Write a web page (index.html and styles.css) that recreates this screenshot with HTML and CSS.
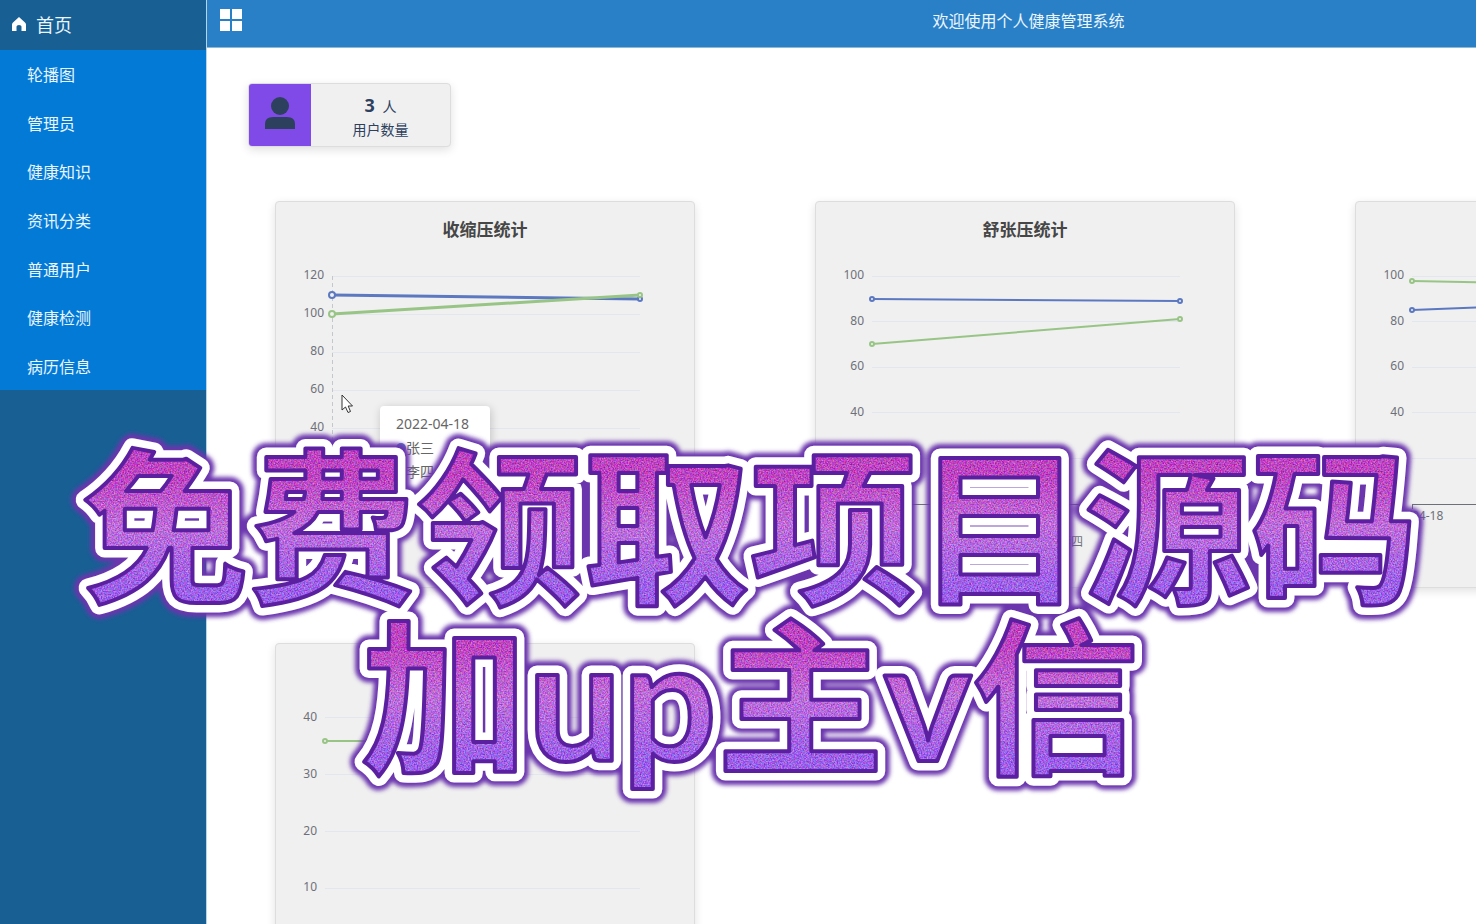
FILE: index.html
```html
<!DOCTYPE html>
<html lang="zh-CN">
<head>
    <meta charset="UTF-8">
    <meta name="viewport" content="width=device-width, initial-scale=1.0">
    <title>个人健康管理系统</title>
    <link rel="stylesheet" href="styles.css">
</head>
<body>
    <div class="app">
        <nav class="sidebar">
            <a class="home" href="#">
                <svg width="16" height="16" viewBox="0 0 16 16"><path fill="#fff" d="M8 1 L14 6.5 Q15 7.500 15 8.500 V15 H10.500 V10.500 Q10.500 9 8 9 Q5.500 9 5.500 10.500 V15 H1 V8.500 Q1 7.500 2 6.500 Z"/></svg>
                首页
            </a>
            <div class="menu">
                <a href="#">轮播图</a>
                <a href="#">管理员</a>
                <a href="#">健康知识</a>
                <a href="#">资讯分类</a>
                <a href="#">普通用户</a>
                <a href="#">健康检测</a>
                <a href="#">病历信息</a>
            </div>
        </nav>

        <div class="main">
            <header class="topbar">
                <button type="button" class="toggle" aria-label="菜单">
                    <svg width="22" height="22" viewBox="0 0 22 22" fill="#fff">
                        <rect x="0" y="0" width="10" height="10"/>
                        <rect x="12" y="0" width="10" height="10"/>
                        <rect x="0" y="12" width="10" height="10"/>
                        <rect x="12" y="12" width="10" height="10"/>
                    </svg>
                </button>
                <span class="welcome">欢迎使用个人健康管理系统</span>
            </header>

            <div class="stat">
                <div class="stat-icon">
                    <svg width="30" height="34" viewBox="0 0 30 34" fill="#2d405e">
                        <circle cx="15" cy="10" r="9"/>
                        <path d="M0 33 V28 Q0 21 8 21 H22 Q30 21 30 28 V33 Z"/>
                    </svg>
                </div>
                <div class="stat-text">
                    <div><b>3</b> 人</div>
                    <div>用户数量</div>
                </div>
            </div>

            <div class="charts">
                <section class="card">
                    <h2>收缩压统计</h2>
                    <svg class="chart" viewBox="0 0 418 345">
                        <path class="grid" d="M56 34.500H364M56 72.500H364M56 110.500H364M56 148.500H364M56 186.500H364M56 224.500H364"/>
                        <path class="axis" d="M56 262.500H364M56.500 262V267M363.500 262V267"/>
                        <path class="pointer" d="M56.500 34V262"/>
                        <g class="y">
                            <text x="48" y="37">120</text>
                            <text x="48" y="75">100</text>
                            <text x="48" y="113">80</text>
                            <text x="48" y="151">60</text>
                            <text x="48" y="189">40</text>
                            <text x="48" y="227">20</text>
                            <text x="48" y="265">0</text>
                        </g>
                        <g class="blue strong">
                            <path d="M56 53L364 57"/>
                            <circle cx="56" cy="53" r="3"/><circle cx="364" cy="57" r="2"/>
                        </g>
                        <g class="green strong">
                            <path d="M56 72L364 53"/>
                            <circle cx="56" cy="72" r="3"/><circle cx="364" cy="53" r="2"/>
                        </g>
                    </svg>
                    <svg class="cursor" width="14" height="20" viewBox="0 0 14 20"><path fill="#fff" stroke="#333" d="M1 1V16L4.500 13L7 18.500L9.500 17.500L7.200 12H11.500Z"/></svg>
                    <div class="tooltip">
                        <div>2022-04-18</div>
                        <div><i class="dot dot-blue"></i>张三</div>
                        <div><i class="dot dot-green"></i>李四</div>
                    </div>
                </section>

                <section class="card">
                    <h2>舒张压统计</h2>
                    <svg class="chart" viewBox="0 0 418 345">
                        <path class="grid" d="M56 34.500H364M56 79.500H364M56 125.500H364M56 170.500H364M56 216.500H364"/>
                        <path class="axis" d="M56 262.500H364M56.500 262V267M363.500 262V267"/>
                        <g class="y">
                            <text x="48" y="37">100</text>
                            <text x="48" y="83">80</text>
                            <text x="48" y="128">60</text>
                            <text x="48" y="174">40</text>
                            <text x="48" y="219">20</text>
                            <text x="48" y="265">0</text>
                        </g>
                        <g class="blue">
                            <path d="M56 57L364 59"/>
                            <circle cx="56" cy="57" r="2"/><circle cx="364" cy="59" r="2"/>
                        </g>
                        <g class="green">
                            <path d="M56 102L364 77"/>
                            <circle cx="56" cy="102" r="2"/><circle cx="364" cy="77" r="2"/>
                        </g>
                        <text class="legend" x="243" y="304">李四</text>
                    </svg>
                </section>

                <section class="card">
                    <h2></h2>
                    <svg class="chart" viewBox="0 0 418 345">
                        <path class="grid" d="M56 34.500H364M56 79.500H364M56 125.500H364M56 170.500H364M56 216.500H364"/>
                        <path class="axis" d="M56 262.500H364M56.500 262V267M363.500 262V267"/>
                        <g class="y">
                            <text x="48" y="37">100</text>
                            <text x="48" y="83">80</text>
                            <text x="48" y="128">60</text>
                            <text x="48" y="174">40</text>
                        </g>
                        <text class="date" x="56" y="278">2022-04-18</text>
                        <g class="blue">
                            <path d="M56 68L364 56"/>
                            <circle cx="56" cy="68" r="2"/><circle cx="364" cy="56" r="2"/>
                        </g>
                        <g class="green">
                            <path d="M56 39L364 45"/>
                            <circle cx="56" cy="39" r="2"/><circle cx="364" cy="45" r="2"/>
                        </g>
                    </svg>
                </section>

                <section class="card">
                    <h2></h2>
                    <svg class="chart" viewBox="0 0 418 345">
                        <path class="grid" d="M49 33.500H364M49 90.500H364M49 147.500H364M49 204.500H364"/>
                        <g class="y">
                            <text x="41" y="37">40</text>
                            <text x="41" y="94">30</text>
                            <text x="41" y="151">20</text>
                            <text x="41" y="207">10</text>
                        </g>
                        <g class="green">
                            <path d="M49 57H150"/>
                            <circle cx="49" cy="57" r="2"/>
                        </g>
                    </svg>
                </section>
            </div>
        </div>

        <svg class="banner">
            <defs>
                <linearGradient id="fill" x1="0" y1="0" x2="0" y2="1">
                    <stop offset="0.25" stop-color="#b840bc"/>
                    <stop offset="0.5" stop-color="#b868d4"/>
                    <stop offset="0.8" stop-color="#985ce4"/>
                </linearGradient>
                <filter id="glow" x="-5%" y="-10%" width="110%" height="120%">
                    <feGaussianBlur stdDeviation="2"/>
                </filter>
                <!-- glitter grain, kept inside the letters -->
                <filter id="grain" x="0" y="0" width="100%" height="100%" color-interpolation-filters="sRGB">
                    <feTurbulence type="fractalNoise" baseFrequency="0.7" numOctaves="2" seed="4"/>
                    <feColorMatrix values="2 0 0 0 -0.5  0 2 0 0 -0.5  0 0 2 0 -0.5  0 0 0 0 1" result="noise"/>
                    <feComposite in="SourceGraphic" in2="noise" operator="arithmetic" k2="1" k3="0.4" k4="-0.18"/>
                    <feComposite in2="SourceGraphic" operator="in"/>
                </filter>
                <g id="words">
                    <text x="50.800%" y="591">免费领取项目源码</text>
                    <text x="50.800%" y="761">加up主v信</text>
                </g>
            </defs>
            <use href="#words" class="layer-glow"/>
            <use href="#words" class="layer-white"/>
            <use href="#words" class="layer-fill"/>
            <use href="#words" class="layer-edge"/>
        </svg>
    </div>
</body>
</html>
```
FILE: styles.css
```css
body {
    margin: 0;
    font-family: "Noto Sans", "Noto Sans CJK SC", sans-serif;
    font-size: 16px;
    color: #2d405e;
    background-color: #fff;
}
a {
    color: #eaf6ff;
    text-decoration: none;
}
.app {
    position: relative;
    display: flex;
    height: 100vh;
    overflow: hidden;
}

/* sidebar */
.sidebar {
    flex: 0 0 206px;
    background-color: #185f94;
    border-right: 1px solid #b5d6ea;
}
.home {
    display: flex;
    align-items: center;
    gap: 9px;
    height: 48px;
    padding: 0 0 2px 11px;
    font-size: 18px;
}
.menu {
    display: flex;
    flex-direction: column;
    height: 340px;
    background-color: #037ad6;
}
.menu a {
    flex: 1;
    display: flex;
    align-items: center;
    padding-left: 27px;
}

/* top bar */
.main {
    flex: 1;
    min-width: 0;
    overflow: hidden;
}
.topbar {
    display: flex;
    height: 47px;
    background-color: #2a80c6;
    border-bottom: 1px solid #8fb9d3;
}
.toggle {
    padding: 9px 13px;
    border: none;
    background: none;
    line-height: 0;
    align-self: flex-start;
    cursor: pointer;
}
.welcome {
    flex: 1;
    padding-left: 326px;
    text-align: center;
    line-height: 42px;
    color: #eaf6ff;
}

/* user count */
.stat {
    display: flex;
    width: 201px;
    height: 62px;
    margin: 35px 0 54px 41px;
    border: 1px solid #ddd;
    border-radius: 4px;
    background-color: #f0f0f0;
    box-shadow: 0 3px 10px rgba(0, 0, 0, 0.12);
    overflow: hidden;
}
.stat-icon {
    display: flex;
    width: 62px;
    padding-bottom: 4px;
    align-items: center;
    justify-content: center;
    background-color: #804ae8;
}
.stat-text {
    flex: 1;
    padding-top: 10px;
    text-align: center;
    font-size: 14px;
    line-height: 23px;
}
.stat-text b {
    margin-right: 4px;
    font-size: 18px;
}

/* charts */
.charts {
    display: grid;
    grid-template-columns: repeat(3, 420px);
    gap: 55px 120px;
    padding-left: 68px;
}
.card {
    position: relative;
    height: 385px;
    border: 1px solid #ddd;
    border-radius: 4px;
    background-color: #f0f0f0;
    box-shadow: 0 3px 10px rgba(0, 0, 0, 0.12);
}
.card h2 {
    height: 24px;
    margin: 0;
    padding-top: 16px;
    text-align: center;
    font-size: 17px;
    line-height: 24px;
    color: #464646;
}
.chart {
    display: block;
    width: 100%;
    font-size: 12px;
    fill: #6e7079;
}
.grid {
    stroke: #e2e6ee;
}
.axis {
    stroke: #6e7079;
}
.pointer {
    stroke: #c4c8cc;
    stroke-dasharray: 4 3;
}
.y {
    text-anchor: end;
}
.date {
    text-anchor: middle;
}
.blue {
    stroke: #5b78c0;
    stroke-width: 2;
    fill: #f0f0f0;
}
.green {
    stroke: #98c585;
    stroke-width: 2;
    fill: #f0f0f0;
}
.strong {
    stroke-width: 3;
}
.chart circle {
    stroke-width: 2;
}
.cursor {
    position: absolute;
    left: 65px;
    top: 192px;
}
.tooltip {
    position: absolute;
    left: 104px;
    top: 204px;
    width: 78px;
    padding: 6px 16px;
    border-radius: 4px;
    background-color: #fff;
    box-shadow: 1px 2px 10px rgba(0, 0, 0, 0.2);
    font-size: 14px;
    line-height: 24px;
    color: #666;
    white-space: nowrap;
}
.dot {
    display: inline-block;
    width: 10px;
    height: 10px;
    border-radius: 50%;
}
.dot-blue {
    background-color: #5470c6;
}
.dot-green {
    background-color: #91cc75;
}

/* big caption over the page */
.banner {
    position: absolute;
    left: 0;
    top: 0;
    width: 100%;
    height: 100%;
    pointer-events: none;
    font-family: Lato, "Noto Sans CJK SC", sans-serif;
    font-size: 167px;
    font-weight: bold;
    text-anchor: middle;
    stroke-linejoin: round;
}
.layer-glow {
    fill: #6a35ad;
    stroke: #6a35ad;
    stroke-width: 28px;
    filter: url(#glow);
}
.layer-white {
    fill: #fff;
    stroke: #fff;
    stroke-width: 19px;
}
.layer-fill {
    fill: url(#fill);
    filter: url(#grain);
}
.layer-edge {
    fill: none;
    stroke: #5a20a0;
    stroke-width: 4px;
}
```
